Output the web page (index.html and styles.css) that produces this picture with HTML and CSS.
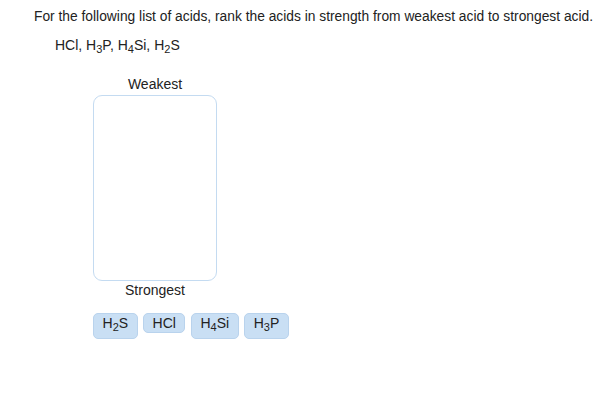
FILE: index.html
```html
<!DOCTYPE html>
<html lang="en">
<head>
    <meta charset="UTF-8">
    <title>Rank the acids</title>
    <link rel="stylesheet" href="styles.css">
</head>
<body>
    <p class="question">For the following list of acids, rank the acids in strength from weakest acid to strongest acid.</p>
    <p class="list">HCl, H<sub>3</sub>P, H<sub>4</sub>Si, H<sub>2</sub>S</p>

    <!-- Ranking drop zone -->
    <div class="ranking">
        <div class="label">Weakest</div>
        <div class="dropzone"></div>
        <div class="label">Strongest</div>
    </div>

    <!-- Draggable answers -->
    <div class="chips">
        <div class="chip">H<sub>2</sub>S</div>
        <div class="chip">HCl</div>
        <div class="chip">H<sub>4</sub>Si</div>
        <div class="chip">H<sub>3</sub>P</div>
    </div>
</body>
</html>
```

FILE: styles.css
```css
body {
    margin: 0;
    font-family: 'Liberation Sans', Arial, sans-serif;
    font-size: 14px;
    color: #222;
    background: #fff;
}

sub {
    font-size: 11px;
    line-height: 0;
    vertical-align: -3px;
}

.question {
    margin: 0;
    padding: 9px 0 0 34px;
    font-size: 13.8px;
    line-height: 16px;
}

.list {
    margin: 0;
    padding: 12px 0 0 55px;
    line-height: 16px;
}

.ranking {
    width: 124px;
    margin: 23px 0 0 93px;
    display: flex;
    flex-direction: column;
    align-items: center;
}

.label {
    line-height: 16px;
}

.dropzone {
    width: 122px;
    height: 184px;
    margin: 3px 0 1px;
    border: 1px solid #c4dbf1;
    border-radius: 9px;
}

.chips {
    display: flex;
    align-items: flex-start;
    gap: 5.5px;
    margin: 15px 0 0 93px;
}

.chip {
    background: #c9dff4;
    border: 1px solid #b9d3ed;
    border-radius: 5px;
    padding: 1px 8.5px;
    line-height: 16px;
}

/* subscripts make the chip taller, as in the original widget */
.chip sub {
    line-height: 19px;
    vertical-align: -3px;
}
```
